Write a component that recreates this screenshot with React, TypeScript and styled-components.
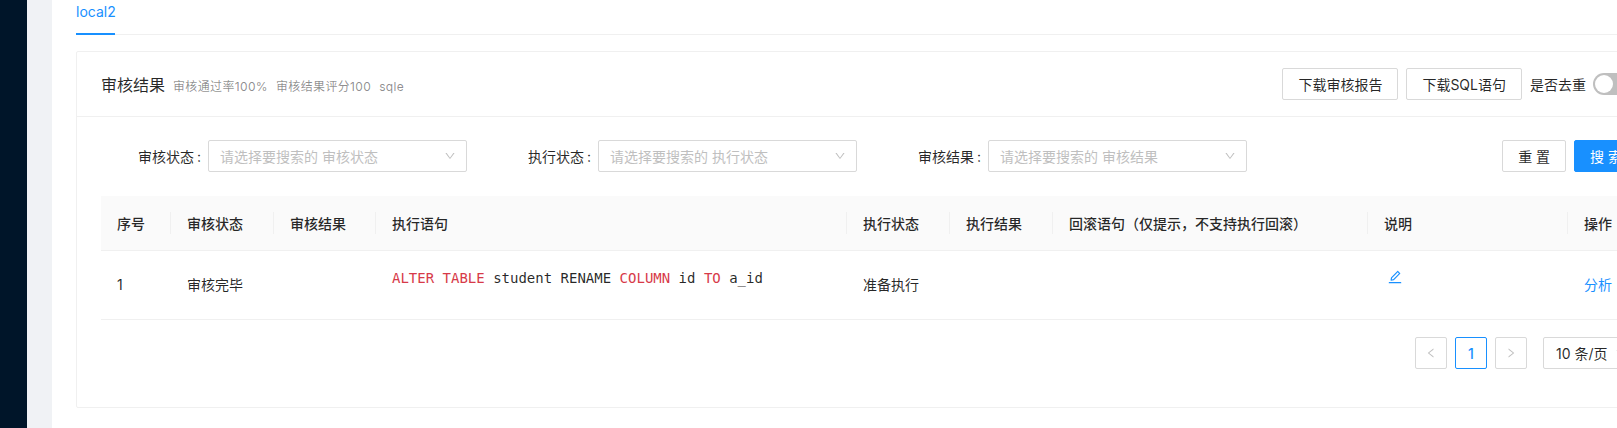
import { FC } from "react";
import styled, { createGlobalStyle } from "styled-components";
import {
  AiOutlineDown,
  AiOutlineEdit,
  AiOutlineLeft,
  AiOutlineRight,
} from "react-icons/ai";

const GlobalStyle = createGlobalStyle`
  html, body {
    margin: 0;
    height: 428px;
    overflow: hidden;
    background: #fff;
    font-family: Inter, "Noto Sans CJK SC", sans-serif;
    font-size: 14px;
    color: rgba(0, 0, 0, 0.85);
  }
`;

const FILTERS = [
  { label: "审核状态", placeholder: "请选择要搜索的 审核状态" },
  { label: "执行状态", placeholder: "请选择要搜索的 执行状态" },
  { label: "审核结果", placeholder: "请选择要搜索的 审核结果" },
];

const COLUMNS = [
  { title: "序号", width: 70 },
  { title: "审核状态", width: 103 },
  { title: "审核结果", width: 102 },
  { title: "执行语句", width: 471 },
  { title: "执行状态", width: 103 },
  { title: "执行结果", width: 103 },
  { title: "回滚语句（仅提示，不支持执行回滚）", width: 315 },
  { title: "说明", width: 200 },
  { title: "操作", width: 70 },
];

const Filter: FC<{ label: string; placeholder: string }> = ({
  label,
  placeholder,
}) => (
  <FilterItem>
    <FilterLabel>{label}</FilterLabel>
    <Select>
      <Placeholder>{placeholder}</Placeholder>
      <AiOutlineDown size={12} color="#bfbfbf" />
    </Select>
  </FilterItem>
);

const App: FC = () => (
  <Page>
    <GlobalStyle />
    <Sidebar />
    <Gutter />
    <Main>
      <Tabs>
        <Tab>local2</Tab>
      </Tabs>
      <Card>
        <CardHeader>
          <TitleGroup>
            <Title>审核结果</Title>
            <Meta>审核通过率100%</Meta>
            <Meta>审核结果评分100</Meta>
            <Meta>sqle</Meta>
          </TitleGroup>
          <Actions>
            <Button>下载审核报告</Button>
            <Button>下载SQL语句</Button>
            <SwitchLabel>是否去重</SwitchLabel>
            <Switch />
          </Actions>
        </CardHeader>
        <FilterRow>
          {FILTERS.map((filter) => (
            <Filter key={filter.label} {...filter} />
          ))}
          <FilterButtons>
            <Button>重 置</Button>
            <Button $primary>搜 索</Button>
          </FilterButtons>
        </FilterRow>
        <Table>
          <colgroup>
            {COLUMNS.map((column) => (
              <col key={column.title} width={column.width} />
            ))}
          </colgroup>
          <thead>
            <tr>
              {COLUMNS.map((column) => (
                <HeadCell key={column.title}>{column.title}</HeadCell>
              ))}
            </tr>
          </thead>
          <tbody>
            <tr>
              <Cell>1</Cell>
              <Cell>审核完毕</Cell>
              <Cell />
              <Cell>
                <Sql>
                  <Keyword>ALTER TABLE</Keyword> student RENAME{" "}
                  <Keyword>COLUMN</Keyword> id <Keyword>TO</Keyword> a_id
                </Sql>
              </Cell>
              <Cell>准备执行</Cell>
              <Cell />
              <Cell />
              <Cell>
                <EditLink>
                  <AiOutlineEdit size={16} />
                </EditLink>
              </Cell>
              <Cell>
                <Link>分析</Link>
              </Cell>
            </tr>
          </tbody>
        </Table>
        <Pagination>
          <PageButton $disabled>
            <AiOutlineLeft size={12} />
          </PageButton>
          <PageButton $active>1</PageButton>
          <PageButton $disabled>
            <AiOutlineRight size={12} />
          </PageButton>
          <PageSize>
            10 条/页
            <AiOutlineDown size={12} color="#bfbfbf" />
          </PageSize>
        </Pagination>
      </Card>
    </Main>
  </Page>
);

const Page = styled.div`
  display: flex;
  width: 1617px;
  height: 428px;
  overflow: hidden;
`;

const Sidebar = styled.div`
  flex: 0 0 27px;
  background: #001529;
`;

const Gutter = styled.div`
  flex: 0 0 25px;
  background: #f0f2f5;
`;

const Main = styled.div`
  flex: 0 0 1610px;
  padding-left: 24px;
  box-sizing: border-box;
`;

const Tabs = styled.div`
  display: flex;
  height: 35px;
  border-bottom: 1px solid #f0f0f0;
  box-sizing: border-box;
`;

const Tab = styled.div`
  height: 35px;
  padding-top: 2px;
  box-sizing: border-box;
  line-height: 20px;
  color: #1890ff;
  border-bottom: 2px solid #1890ff;
  width: 39px;
`;

const Card = styled.div`
  width: 1586px;
  height: 357px;
  margin-top: 16px;
  border: 1px solid #f0f0f0;
  border-radius: 2px;
  box-sizing: border-box;
`;

const CardHeader = styled.div`
  display: flex;
  align-items: center;
  justify-content: space-between;
  height: 65px;
  padding: 0 24px;
  border-bottom: 1px solid #f0f0f0;
  box-sizing: border-box;
`;

const TitleGroup = styled.div`
  display: flex;
  align-items: baseline;
  gap: 8px;
`;

const Title = styled.span`
  font-size: 16px;
`;

const Meta = styled.span`
  font-size: 12px;
  letter-spacing: 0.35px;
  color: rgba(0, 0, 0, 0.45);
`;

const Actions = styled.div`
  display: flex;
  align-items: center;
  gap: 8px;
`;

const SwitchLabel = styled.span`
  margin-right: -1px;
`;

const Button = styled.button<{ $primary?: boolean }>`
  height: 32px;
  padding: 0 15px;
  font: inherit;
  border-radius: 2px;
  border: 1px solid ${(p) => (p.$primary ? "#1890ff" : "#d9d9d9")};
  background: ${(p) => (p.$primary ? "#1890ff" : "#fff")};
  color: ${(p) => (p.$primary ? "#fff" : "rgba(0, 0, 0, 0.85)")};
`;

const Switch = styled.div`
  position: relative;
  width: 44px;
  height: 22px;
  border-radius: 11px;
  background: #bfbfbf;

  &::after {
    content: "";
    position: absolute;
    top: 2px;
    left: 2px;
    width: 18px;
    height: 18px;
    border-radius: 50%;
    background: #fff;
  }
`;

const FilterRow = styled.div`
  display: flex;
  padding: 23px 23px 24px 0;
`;

const FilterItem = styled.div`
  display: flex;
  align-items: center;
  width: 390px;
`;

const FilterLabel = styled.label`
  flex: 0 0 124px;
  margin-right: 7px;
  text-align: right;

  &::after {
    content: ":";
    margin-left: 3px;
  }
`;

const Select = styled.div`
  display: flex;
  align-items: center;
  justify-content: space-between;
  width: 259px;
  height: 32px;
  padding: 0 10px 0 11px;
  border: 1px solid #d9d9d9;
  border-radius: 2px;
  box-sizing: border-box;
`;

const Placeholder = styled.span`
  color: #bfbfbf;
`;

const FilterButtons = styled.div`
  display: flex;
  gap: 8px;
  margin-left: auto;
`;

const Table = styled.table`
  width: 1537px;
  margin: 0 24px;
  table-layout: fixed;
  border-collapse: collapse;
`;

const HeadCell = styled.th`
  position: relative;
  height: 54px;
  padding: 0 16px;
  background: #fafafa;
  border-bottom: 1px solid #f0f0f0;
  font-weight: 500;
  text-align: left;

  &:not(:last-child)::before {
    content: "";
    position: absolute;
    top: 16px;
    right: 0;
    width: 1px;
    height: 22px;
    background: #f0f0f0;
  }
`;

const Cell = styled.td`
  height: 69px;
  padding: 0 16px 2px;
  border-bottom: 1px solid #f0f0f0;
  box-sizing: border-box;
`;

const Sql = styled.div`
  font-family: "DejaVu Sans Mono", monospace;
  font-size: 14px;
  margin-top: -13px;
`;

const Keyword = styled.span`
  color: #d73a49;
`;

const Link = styled.a`
  color: #1890ff;
`;

const EditLink = styled(Link)`
  display: block;
  height: 16px;
  margin: -15px 0 0 3px;
`;

const Pagination = styled.div`
  display: flex;
  justify-content: flex-end;
  gap: 8px;
  margin: 17px 22px 0 0;
`;

const PageButton = styled.div<{ $active?: boolean; $disabled?: boolean }>`
  display: flex;
  align-items: center;
  justify-content: center;
  width: 32px;
  height: 32px;
  box-sizing: border-box;
  border-radius: 2px;
  border: 1px solid ${(p) => (p.$active ? "#1890ff" : "#d9d9d9")};
  color: ${(p) => (p.$active ? "#1890ff" : p.$disabled ? "#bfbfbf" : "inherit")};
  font-weight: ${(p) => (p.$active ? 500 : 400)};
`;

const PageSize = styled.div`
  display: flex;
  align-items: center;
  justify-content: space-between;
  width: 96px;
  height: 32px;
  margin-left: 8px;
  padding: 0 11px 0 12px;
  box-sizing: border-box;
  border: 1px solid #d9d9d9;
  border-radius: 2px;
  white-space: nowrap;
`;

export default App;
